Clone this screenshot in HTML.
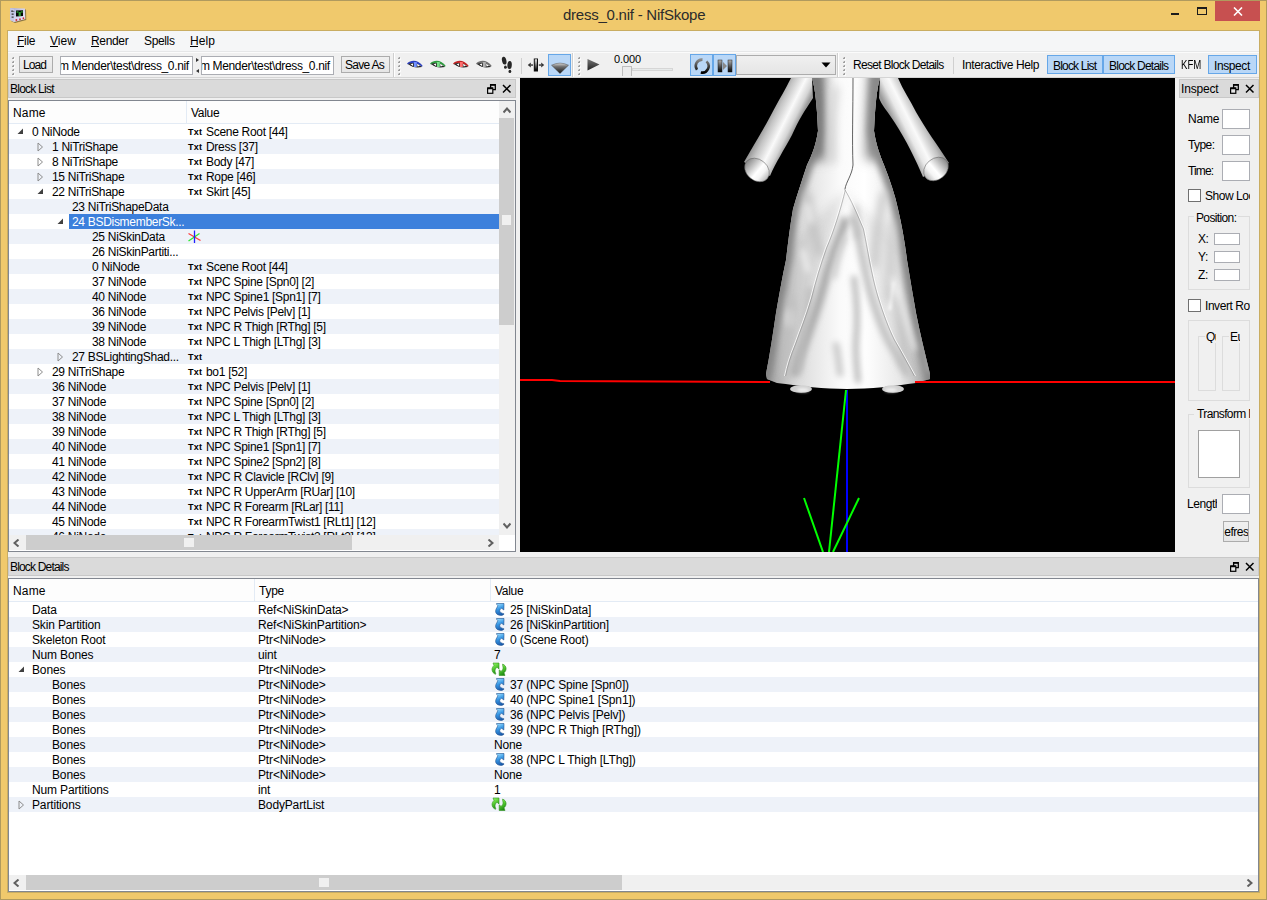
<!DOCTYPE html><html><head><meta charset="utf-8"><title>NifSkope</title><style>
*{box-sizing:border-box;margin:0;padding:0}
html,body{width:1267px;height:900px;overflow:hidden}
body{position:relative;background:#f0c96c;font-family:"Liberation Sans",sans-serif;font-size:12px;color:#000}
.a{position:absolute}
.t{position:absolute;white-space:pre}
.row{position:absolute;height:15px}
.st{background:#eef2f9}
</style></head><body>
<div class="a" style="left:0;top:0;width:1267px;height:900px;border:1px solid #b09a5e"></div>
<div class="a" style="left:7px;top:30px;width:1253px;height:863px;background:#c9ad62"></div>
<div class="a" style="left:8px;top:31px;width:1251px;height:861px;background:#f0f0f0"></div>
<svg class="a" style="left:9px;top:6px" width="18" height="18" viewBox="0 0 18 18">
<defs><linearGradient id="ig" x1="0" y1="0" x2="1" y2="1"><stop offset="0" stop-color="#a6aad6"/><stop offset="0.5" stop-color="#d2d2ec"/><stop offset="1" stop-color="#ececf8"/></linearGradient>
<filter id="isd" x="-30%" y="-30%" width="160%" height="160%"><feGaussianBlur stdDeviation="0.6"/></filter></defs>
<path d="M2 3 L17 3.5 L17.3 14 L6 17 L2 15 Z" fill="#3a3220" opacity="0.55" filter="url(#isd)"/>
<path d="M1.2 2 L16 2.6 L16.3 13 L5 16 L1.2 14 Z" fill="url(#ig)"/>
<path d="M1.2 2 L5 3 L5 16 L1.2 14 Z" fill="#c6c8e4"/>
<rect x="2.2" y="4.5" width="2" height="1.3" fill="#333"/><rect x="2.6" y="7.5" width="2" height="1.3" fill="#333"/><rect x="2.6" y="10.5" width="2" height="1.3" fill="#444"/>
<circle cx="4.8" cy="5.5" r="0.6" fill="#555"/>
<path d="M7 4.6 L14 4.2 L14 10 L7 10.6 Z" fill="#060806"/>
<rect x="9.6" y="6" width="2.2" height="4" fill="#2f9f35"/><rect x="7.5" y="5" width="2" height="2" fill="#1f6f25"/><rect x="11.8" y="4.8" width="2" height="2" fill="#1f6f25"/>
<circle cx="7.4" cy="14" r="1" fill="#d42a3a"/><circle cx="11" cy="13.2" r="1" fill="#c43a5a"/><circle cx="14.4" cy="12.2" r="0.9" fill="#d42a3a"/>
</svg>
<div class="t" style="left:563px;top:6px;font-size:15px;line-height:18px;letter-spacing:-0.24px;color:#2b2b2b">dress_0.nif - NifSkope</div>
<div class="a" style="left:1171px;top:13px;width:8px;height:2px;background:#1c1c1c"></div>
<div class="a" style="left:1197px;top:7px;width:10px;height:8px;border:1px solid #1c1c1c;border-top-width:2px"></div>
<div class="a" style="left:1215px;top:1px;width:45px;height:20px;background:#c75050"></div>
<svg class="a" style="left:1233px;top:7px" width="10" height="9" viewBox="0 0 10 9"><path d="M1 0.5 L9 8.5 M9 0.5 L1 8.5" stroke="#fff" stroke-width="1.6"/></svg>
<div class="a" style="left:8px;top:31px;width:1251px;height:20px;background:#f5f6f7"></div>
<div class="a" style="left:8px;top:51px;width:1251px;height:1px;background:#e6e7e8"></div>
<div class="t" style="left:17px;top:34px;font-size:12px;line-height:15px;letter-spacing:-0.31px">File</div>
<div class="a" style="left:17px;top:46px;width:7px;height:1px;background:#000"></div>
<div class="t" style="left:50px;top:34px;font-size:12px;line-height:15px;letter-spacing:0.03px">View</div>
<div class="a" style="left:50px;top:46px;width:8px;height:1px;background:#000"></div>
<div class="t" style="left:91px;top:34px;font-size:12px;line-height:15px;letter-spacing:-0.33px">Render</div>
<div class="a" style="left:91px;top:46px;width:8px;height:1px;background:#000"></div>
<div class="t" style="left:144px;top:34px;font-size:12px;line-height:15px;letter-spacing:-0.36px">Spells</div>
<div class="t" style="left:190px;top:34px;font-size:12px;line-height:15px;letter-spacing:0.07px">Help</div>
<div class="a" style="left:190px;top:46px;width:8px;height:1px;background:#000"></div>
<div class="a" style="left:8px;top:52px;width:1251px;height:25px;background:#f0f0f0;border-top:1px solid #fbfbfb"></div>
<div class="a" style="left:8px;top:77px;width:1251px;height:1px;background:#d5d5d5"></div>
<div class="a" style="left:12px;top:57px;width:2px;height:2px;background:linear-gradient(135deg,#d8d8d8 0 40%,#a0a0a0 40%);box-shadow:1px 1px 0 #fcfcfc"></div>
<div class="a" style="left:12px;top:61px;width:2px;height:2px;background:linear-gradient(135deg,#d8d8d8 0 40%,#a0a0a0 40%);box-shadow:1px 1px 0 #fcfcfc"></div>
<div class="a" style="left:12px;top:65px;width:2px;height:2px;background:linear-gradient(135deg,#d8d8d8 0 40%,#a0a0a0 40%);box-shadow:1px 1px 0 #fcfcfc"></div>
<div class="a" style="left:12px;top:69px;width:2px;height:2px;background:linear-gradient(135deg,#d8d8d8 0 40%,#a0a0a0 40%);box-shadow:1px 1px 0 #fcfcfc"></div>
<div class="a" style="left:12px;top:73px;width:2px;height:2px;background:linear-gradient(135deg,#d8d8d8 0 40%,#a0a0a0 40%);box-shadow:1px 1px 0 #fcfcfc"></div>
<div class="a" style="left:19px;top:56px;width:34px;height:17px;border:1px solid #acacac;background:linear-gradient(#f0f0f0,#e5e5e5)"></div>
<div class="t" style="left:23px;top:58px;font-size:12px;line-height:15px;letter-spacing:-0.90px">Load</div>
<div class="a" style="left:60px;top:56px;width:133px;height:19px;border:1px solid #abadb3;background:#fff;overflow:hidden"></div>
<div class="a" style="left:61px;top:57px;width:131px;height:17px;overflow:hidden">
<div class="t" style="left:-2px;top:2px;font-size:12px;line-height:15px;letter-spacing:-0.36px">m Mender\test\dress_0.nif</div>
</div>
<div class="a" style="left:201px;top:56px;width:133px;height:19px;border:1px solid #abadb3;background:#fff;overflow:hidden"></div>
<div class="a" style="left:202px;top:57px;width:131px;height:17px;overflow:hidden">
<div class="t" style="left:-2px;top:2px;font-size:12px;line-height:15px;letter-spacing:-0.36px">m Mender\test\dress_0.nif</div>
</div>
<svg class="a" style="left:195px;top:57px" width="5" height="17" viewBox="0 0 5 17"><path d="M1 1 L4 3 L1 5 Z" fill="#333"/><path d="M4 12 L1 14 L4 16 Z" fill="#333"/></svg>
<div class="a" style="left:341px;top:56px;width:49px;height:17px;border:1px solid #acacac;background:linear-gradient(#f0f0f0,#e5e5e5)"></div>
<div class="t" style="left:345px;top:58px;font-size:12px;line-height:15px;letter-spacing:-0.71px">Save As</div>
<div class="a" style="left:393px;top:53px;width:1px;height:24px;background:#cfcfcf"></div>
<div class="a" style="left:394px;top:53px;width:1px;height:24px;background:#fff"></div>
<div class="a" style="left:398px;top:57px;width:2px;height:2px;background:linear-gradient(135deg,#d8d8d8 0 40%,#a0a0a0 40%);box-shadow:1px 1px 0 #fcfcfc"></div>
<div class="a" style="left:398px;top:61px;width:2px;height:2px;background:linear-gradient(135deg,#d8d8d8 0 40%,#a0a0a0 40%);box-shadow:1px 1px 0 #fcfcfc"></div>
<div class="a" style="left:398px;top:65px;width:2px;height:2px;background:linear-gradient(135deg,#d8d8d8 0 40%,#a0a0a0 40%);box-shadow:1px 1px 0 #fcfcfc"></div>
<div class="a" style="left:398px;top:69px;width:2px;height:2px;background:linear-gradient(135deg,#d8d8d8 0 40%,#a0a0a0 40%);box-shadow:1px 1px 0 #fcfcfc"></div>
<div class="a" style="left:398px;top:73px;width:2px;height:2px;background:linear-gradient(135deg,#d8d8d8 0 40%,#a0a0a0 40%);box-shadow:1px 1px 0 #fcfcfc"></div>
<svg class="a" style="left:406px;top:59px" width="18" height="11" viewBox="0 0 18 11">
<path d="M1 4.5 C5 0.5 12 0.5 16.5 6.5 L16 8 C12 4 6 3.5 2 5.5 Z" fill="#2b3fbf"/>
<path d="M2 5 C6 3 11 3.5 16 8 C11 9 6 8.5 2 5 Z" fill="#222"/>
<path d="M4.5 5.2 L7 4.5 L7 7 Z" fill="#fff"/><path d="M11 4.8 L14 6.8 L11.5 7.6 Z" fill="#fff"/>
<rect x="7.8" y="3" width="3" height="5" fill="#7090ff"/>
</svg>
<svg class="a" style="left:429px;top:59px" width="18" height="11" viewBox="0 0 18 11">
<path d="M1 4.5 C5 0.5 12 0.5 16.5 6.5 L16 8 C12 4 6 3.5 2 5.5 Z" fill="#2f9a3f"/>
<path d="M2 5 C6 3 11 3.5 16 8 C11 9 6 8.5 2 5 Z" fill="#222"/>
<path d="M4.5 5.2 L7 4.5 L7 7 Z" fill="#fff"/><path d="M11 4.8 L14 6.8 L11.5 7.6 Z" fill="#fff"/>
<rect x="7.8" y="3" width="3" height="5" fill="#78e088"/>
</svg>
<svg class="a" style="left:452px;top:59px" width="18" height="11" viewBox="0 0 18 11">
<path d="M1 4.5 C5 0.5 12 0.5 16.5 6.5 L16 8 C12 4 6 3.5 2 5.5 Z" fill="#c02525"/>
<path d="M2 5 C6 3 11 3.5 16 8 C11 9 6 8.5 2 5 Z" fill="#222"/>
<path d="M4.5 5.2 L7 4.5 L7 7 Z" fill="#fff"/><path d="M11 4.8 L14 6.8 L11.5 7.6 Z" fill="#fff"/>
<rect x="7.8" y="3" width="3" height="5" fill="#ff7070"/>
</svg>
<svg class="a" style="left:475px;top:59px" width="18" height="11" viewBox="0 0 18 11">
<path d="M1 4.5 C5 0.5 12 0.5 16.5 6.5 L16 8 C12 4 6 3.5 2 5.5 Z" fill="#707070"/>
<path d="M2 5 C6 3 11 3.5 16 8 C11 9 6 8.5 2 5 Z" fill="#222"/>
<path d="M4.5 5.2 L7 4.5 L7 7 Z" fill="#fff"/><path d="M11 4.8 L14 6.8 L11.5 7.6 Z" fill="#fff"/>
<rect x="7.8" y="3" width="3" height="5" fill="#b0b0b0"/>
</svg>
<svg class="a" style="left:500px;top:56px" width="14" height="18" viewBox="0 0 14 18">
<ellipse cx="4.2" cy="4.6" rx="2.2" ry="4" fill="#262626" transform="rotate(-12 4.2 4.6)"/><ellipse cx="5.4" cy="11.2" rx="1.4" ry="1.6" fill="#262626"/>
<ellipse cx="9.6" cy="9" rx="2.2" ry="4" fill="#262626" transform="rotate(4 9.6 9)"/><ellipse cx="9.9" cy="15.4" rx="1.4" ry="1.6" fill="#262626"/>
</svg>
<div class="a" style="left:521px;top:58px;width:1px;height:16px;background:#cfcfcf"></div>
<svg class="a" style="left:527px;top:57px" width="18" height="16" viewBox="0 0 18 16">
<defs><linearGradient id="bar" x1="0" y1="0" x2="0" y2="1"><stop offset="0" stop-color="#e8e8e8"/><stop offset="1" stop-color="#000"/></linearGradient></defs>
<rect x="6.8" y="1.5" width="4.2" height="13" fill="#111"/><rect x="7.8" y="2.3" width="2.2" height="11" fill="url(#bar)"/>
<path d="M0.8 8 L3.8 5.5 L3.8 10.5 Z M17.2 8 L14.2 5.5 L14.2 10.5 Z" fill="#333"/><rect x="3.5" y="7.3" width="2.5" height="1.5" fill="#444"/><rect x="11.8" y="7.3" width="2.5" height="1.5" fill="#444"/>
</svg>
<div class="a" style="left:548px;top:54px;width:23px;height:22px;background:#b9d7f7;border:1px solid #66a7e8"></div>
<svg class="a" style="left:551px;top:62px" width="18" height="12" viewBox="0 0 18 12">
<defs><linearGradient id="cone" x1="0" y1="0" x2="0" y2="1"><stop offset="0" stop-color="#d8d8d8"/><stop offset="0.35" stop-color="#707070"/><stop offset="1" stop-color="#111"/></linearGradient></defs>
<path d="M0.5 3.2 Q9 -1 17.5 3.2 L9 11.5 Z" fill="url(#cone)" stroke="#333" stroke-width="0.4"/></svg>
<div class="a" style="left:572px;top:53px;width:1px;height:24px;background:#cfcfcf"></div>
<div class="a" style="left:573px;top:53px;width:1px;height:24px;background:#fff"></div>
<div class="a" style="left:578px;top:57px;width:2px;height:2px;background:linear-gradient(135deg,#d8d8d8 0 40%,#a0a0a0 40%);box-shadow:1px 1px 0 #fcfcfc"></div>
<div class="a" style="left:578px;top:61px;width:2px;height:2px;background:linear-gradient(135deg,#d8d8d8 0 40%,#a0a0a0 40%);box-shadow:1px 1px 0 #fcfcfc"></div>
<div class="a" style="left:578px;top:65px;width:2px;height:2px;background:linear-gradient(135deg,#d8d8d8 0 40%,#a0a0a0 40%);box-shadow:1px 1px 0 #fcfcfc"></div>
<div class="a" style="left:578px;top:69px;width:2px;height:2px;background:linear-gradient(135deg,#d8d8d8 0 40%,#a0a0a0 40%);box-shadow:1px 1px 0 #fcfcfc"></div>
<div class="a" style="left:578px;top:73px;width:2px;height:2px;background:linear-gradient(135deg,#d8d8d8 0 40%,#a0a0a0 40%);box-shadow:1px 1px 0 #fcfcfc"></div>
<svg class="a" style="left:586px;top:58px" width="15" height="14" viewBox="0 0 15 14"><defs><linearGradient id="pl" x1="0" y1="0" x2="0" y2="1"><stop offset="0" stop-color="#777"/><stop offset="1" stop-color="#222"/></linearGradient></defs><path d="M1.5 1 L13.5 6.5 L1.5 12.5 Z" fill="url(#pl)"/></svg>
<div class="t" style="left:614px;top:53px;font-size:11px;line-height:12px;letter-spacing:-0.13px">0.000</div>
<div class="a" style="left:632px;top:68px;width:41px;height:3px;background:#e7eaea;border:1px solid #d6d6d6"></div>
<div class="a" style="left:622px;top:66px;width:10px;height:10px;background:#ececec;border:1px solid #bdbdbd;border-bottom:none"></div>
<div class="a" style="left:690px;top:54px;width:24px;height:22px;background:#b9d7f7;border:1px solid #66a7e8"></div>
<div class="a" style="left:712px;top:54px;width:24px;height:22px;background:#b9d7f7;border:1px solid #66a7e8"></div>
<div class="a" style="left:712px;top:54px;width:2px;height:22px;background:#66a7e8"></div>
<svg class="a" style="left:693px;top:57px" width="18" height="18" viewBox="0 0 18 18"><defs><linearGradient id="lp1" x1="0" y1="0" x2="0" y2="1"><stop offset="0" stop-color="#888"/><stop offset="1" stop-color="#222"/></linearGradient><linearGradient id="lp2" x1="0" y1="0" x2="0" y2="1"><stop offset="0" stop-color="#777"/><stop offset="1" stop-color="#000"/></linearGradient></defs><path d="M9.5 2.6 A6.4 6.4 0 0 0 4 12.8" stroke="url(#lp1)" stroke-width="2.6" fill="none"/><path d="M7.8 15.4 A6.4 6.4 0 0 0 13.5 4.4" stroke="url(#lp2)" stroke-width="2.6" fill="none"/></svg>
<svg class="a" style="left:716px;top:59px" width="18" height="15" viewBox="0 0 18 15"><defs><linearGradient id="sq" x1="0" y1="0" x2="0" y2="1"><stop offset="0" stop-color="#b0b0b0"/><stop offset="1" stop-color="#000"/></linearGradient></defs><rect x="2" y="1" width="4" height="12" fill="url(#sq)" stroke="#222" stroke-width="0.5"/><path d="M7 3 L11 7 L7 11 Z" fill="#8a8a8a"/><rect x="12" y="1" width="4" height="12" fill="url(#sq)" stroke="#222" stroke-width="0.5"/></svg>
<div class="a" style="left:736px;top:55px;width:100px;height:20px;border:1px solid #acacac;background:linear-gradient(#f0f0f0,#e5e5e5)"></div>
<svg class="a" style="left:821px;top:62px" width="10" height="6" viewBox="0 0 10 6"><path d="M0.5 0.5 L9.5 0.5 L5 5.5 Z" fill="#000"/></svg>
<div class="a" style="left:837px;top:53px;width:1px;height:24px;background:#cfcfcf"></div>
<div class="a" style="left:838px;top:53px;width:1px;height:24px;background:#fff"></div>
<div class="a" style="left:843px;top:57px;width:2px;height:2px;background:linear-gradient(135deg,#d8d8d8 0 40%,#a0a0a0 40%);box-shadow:1px 1px 0 #fcfcfc"></div>
<div class="a" style="left:843px;top:61px;width:2px;height:2px;background:linear-gradient(135deg,#d8d8d8 0 40%,#a0a0a0 40%);box-shadow:1px 1px 0 #fcfcfc"></div>
<div class="a" style="left:843px;top:65px;width:2px;height:2px;background:linear-gradient(135deg,#d8d8d8 0 40%,#a0a0a0 40%);box-shadow:1px 1px 0 #fcfcfc"></div>
<div class="a" style="left:843px;top:69px;width:2px;height:2px;background:linear-gradient(135deg,#d8d8d8 0 40%,#a0a0a0 40%);box-shadow:1px 1px 0 #fcfcfc"></div>
<div class="a" style="left:843px;top:73px;width:2px;height:2px;background:linear-gradient(135deg,#d8d8d8 0 40%,#a0a0a0 40%);box-shadow:1px 1px 0 #fcfcfc"></div>
<div class="t" style="left:853px;top:58px;font-size:12px;line-height:15px;letter-spacing:-0.71px">Reset Block Details</div>
<div class="a" style="left:953px;top:57px;width:1px;height:17px;background:#d0d0d0"></div>
<div class="t" style="left:962px;top:58px;font-size:12px;line-height:15px;letter-spacing:-0.40px">Interactive Help</div>
<div class="a" style="left:1047px;top:55px;width:56px;height:19px;background:#b9d7f7;border:1px solid #66a7e8"></div>
<div class="a" style="left:1103px;top:55px;width:72px;height:19px;background:#b9d7f7;border:1px solid #66a7e8"></div>
<div class="t" style="left:1053px;top:59px;font-size:12px;line-height:15px;letter-spacing:-0.81px">Block List</div>
<div class="t" style="left:1109px;top:59px;font-size:12px;line-height:15px;letter-spacing:-0.77px">Block Details</div>
<div class="t" style="left:1181px;top:58px;font-size:12px;line-height:15px;transform:scaleX(0.8);transform-origin:0 0">KFM</div>
<div class="a" style="left:1208px;top:55px;width:49px;height:19px;background:#b9d7f7;border:1px solid #66a7e8"></div>
<div class="t" style="left:1214px;top:59px;font-size:12px;line-height:15px;letter-spacing:-0.40px">Inspect</div>
<div class="a" style="left:8px;top:79px;width:508px;height:19px;background:#dadada;border:1px solid #c8c8c8"></div>
<div class="t" style="left:10px;top:82px;font-size:12px;line-height:15px;letter-spacing:-0.76px">Block List</div>
<svg class="a" style="left:487px;top:84px" width="25" height="10" viewBox="0 0 25 10">
<path d="M3.6 4 V0.7 H8.3 V5.6 H6" stroke="#000" stroke-width="1.3" fill="none"/>
<rect x="0.6" y="4" width="5.2" height="5.3" fill="#e6e6e6" stroke="#000" stroke-width="1.2"/>
<path d="M0.6 4.4 H5.8 M3.6 0.9 H8.3" stroke="#000" stroke-width="1.8"/>
<path d="M16 1 L23.5 8.5 M23.5 1 L16 8.5" stroke="#000" stroke-width="1.5"/></svg>
<div class="a" style="left:1179px;top:79px;width:80px;height:19px;background:#dadada;border:1px solid #c8c8c8"></div>
<div class="t" style="left:1181px;top:82px;font-size:12px;line-height:15px;letter-spacing:-0.17px">Inspect</div>
<svg class="a" style="left:1230px;top:84px" width="25" height="10" viewBox="0 0 25 10">
<path d="M3.6 4 V0.7 H8.3 V5.6 H6" stroke="#000" stroke-width="1.3" fill="none"/>
<rect x="0.6" y="4" width="5.2" height="5.3" fill="#e6e6e6" stroke="#000" stroke-width="1.2"/>
<path d="M0.6 4.4 H5.8 M3.6 0.9 H8.3" stroke="#000" stroke-width="1.8"/>
<path d="M16 1 L23.5 8.5 M23.5 1 L16 8.5" stroke="#000" stroke-width="1.5"/></svg>
<div class="a" style="left:8px;top:557px;width:1251px;height:19px;background:#dadada;border:1px solid #c8c8c8"></div>
<div class="t" style="left:10px;top:560px;font-size:12px;line-height:15px;letter-spacing:-0.83px">Block Details</div>
<svg class="a" style="left:1230px;top:562px" width="25" height="10" viewBox="0 0 25 10">
<path d="M3.6 4 V0.7 H8.3 V5.6 H6" stroke="#000" stroke-width="1.3" fill="none"/>
<rect x="0.6" y="4" width="5.2" height="5.3" fill="#e6e6e6" stroke="#000" stroke-width="1.2"/>
<path d="M0.6 4.4 H5.8 M3.6 0.9 H8.3" stroke="#000" stroke-width="1.8"/>
<path d="M16 1 L23.5 8.5 M23.5 1 L16 8.5" stroke="#000" stroke-width="1.5"/></svg>
<div class="a" style="left:8px;top:100px;width:508px;height:452px;border:1px solid #828790;background:#fff;overflow:hidden">
<div class="a" style="left:0;top:0;width:490px;height:23px;background:#fdfdfd;border-bottom:1px solid #e3ebf5"></div>
<div class="a" style="left:177px;top:0;width:1px;height:22px;background:#e3ebf5"></div>
<div class="t" style="left:4px;top:5px;font-size:12px;line-height:15px;letter-spacing:0.16px">Name</div>
<div class="t" style="left:182px;top:5px;font-size:12px;line-height:15px;letter-spacing:-0.30px">Value</div>
<div class="row" style="left:0;top:23px;width:490px"></div>
<svg class="a" style="left:8px;top:27px" width="7" height="7" viewBox="0 0 7 7"><path d="M6 0.5 L6 6 L0.5 6 Z" fill="#404040"/></svg>
<div class="t" style="left:23px;top:24px;font-size:12px;line-height:15px;letter-spacing:-0.30px">0 NiNode</div>
<div class="t" style="left:179px;top:24px;font-size:9px;line-height:14px;letter-spacing:0.20px;font-weight:bold">Txt</div>
<div class="t" style="left:197px;top:24px;font-size:12px;line-height:15px;letter-spacing:-0.30px">Scene Root [44]</div>
<div class="row st" style="left:0;top:38px;width:490px"></div>
<svg class="a" style="left:28px;top:41px" width="7" height="10" viewBox="0 0 7 10"><path d="M1 1 L5.5 5 L1 9 Z" fill="none" stroke="#8c8c8c" stroke-width="1"/></svg>
<div class="t" style="left:43px;top:39px;font-size:12px;line-height:15px;letter-spacing:-0.30px">1 NiTriShape</div>
<div class="t" style="left:179px;top:39px;font-size:9px;line-height:14px;letter-spacing:0.20px;font-weight:bold">Txt</div>
<div class="t" style="left:197px;top:39px;font-size:12px;line-height:15px;letter-spacing:-0.30px">Dress [37]</div>
<div class="row" style="left:0;top:53px;width:490px"></div>
<svg class="a" style="left:28px;top:56px" width="7" height="10" viewBox="0 0 7 10"><path d="M1 1 L5.5 5 L1 9 Z" fill="none" stroke="#8c8c8c" stroke-width="1"/></svg>
<div class="t" style="left:43px;top:54px;font-size:12px;line-height:15px;letter-spacing:-0.30px">8 NiTriShape</div>
<div class="t" style="left:179px;top:54px;font-size:9px;line-height:14px;letter-spacing:0.20px;font-weight:bold">Txt</div>
<div class="t" style="left:197px;top:54px;font-size:12px;line-height:15px;letter-spacing:-0.30px">Body [47]</div>
<div class="row st" style="left:0;top:68px;width:490px"></div>
<svg class="a" style="left:28px;top:71px" width="7" height="10" viewBox="0 0 7 10"><path d="M1 1 L5.5 5 L1 9 Z" fill="none" stroke="#8c8c8c" stroke-width="1"/></svg>
<div class="t" style="left:43px;top:69px;font-size:12px;line-height:15px;letter-spacing:-0.30px">15 NiTriShape</div>
<div class="t" style="left:179px;top:69px;font-size:9px;line-height:14px;letter-spacing:0.20px;font-weight:bold">Txt</div>
<div class="t" style="left:197px;top:69px;font-size:12px;line-height:15px;letter-spacing:-0.30px">Rope [46]</div>
<div class="row" style="left:0;top:83px;width:490px"></div>
<svg class="a" style="left:28px;top:87px" width="7" height="7" viewBox="0 0 7 7"><path d="M6 0.5 L6 6 L0.5 6 Z" fill="#404040"/></svg>
<div class="t" style="left:43px;top:84px;font-size:12px;line-height:15px;letter-spacing:-0.30px">22 NiTriShape</div>
<div class="t" style="left:179px;top:84px;font-size:9px;line-height:14px;letter-spacing:0.20px;font-weight:bold">Txt</div>
<div class="t" style="left:197px;top:84px;font-size:12px;line-height:15px;letter-spacing:-0.30px">Skirt [45]</div>
<div class="row st" style="left:0;top:98px;width:490px"></div>
<div class="t" style="left:63px;top:99px;font-size:12px;line-height:15px;letter-spacing:-0.30px">23 NiTriShapeData</div>
<div class="row" style="left:0;top:113px;width:490px"></div>
<div class="a" style="left:60px;top:113px;width:430px;height:15px;background:#3c80dc"></div>
<svg class="a" style="left:48px;top:117px" width="7" height="7" viewBox="0 0 7 7"><path d="M6 0.5 L6 6 L0.5 6 Z" fill="#404040"/></svg>
<div class="t" style="left:63px;top:114px;font-size:12px;line-height:15px;letter-spacing:-0.30px;color:#fff">24 BSDismemberSk...</div>
<div class="row st" style="left:0;top:128px;width:490px"></div>
<div class="t" style="left:83px;top:129px;font-size:12px;line-height:15px;letter-spacing:-0.30px">25 NiSkinData</div>
<svg class="a" style="left:178px;top:128px" width="15" height="15" viewBox="0 0 15 15"><path d="M1.5 4.5 L13.5 11.5" stroke="#ff3b3b" stroke-width="1.3"/><path d="M1.5 12 L12.5 4.5" stroke="#2ee82e" stroke-width="1.3"/><path d="M7.5 1.5 V14" stroke="#2020ff" stroke-width="1.3"/></svg>
<div class="row" style="left:0;top:143px;width:490px"></div>
<div class="t" style="left:83px;top:144px;font-size:12px;line-height:15px;letter-spacing:-0.30px">26 NiSkinPartiti...</div>
<div class="row st" style="left:0;top:158px;width:490px"></div>
<div class="t" style="left:83px;top:159px;font-size:12px;line-height:15px;letter-spacing:-0.30px">0 NiNode</div>
<div class="t" style="left:179px;top:159px;font-size:9px;line-height:14px;letter-spacing:0.20px;font-weight:bold">Txt</div>
<div class="t" style="left:197px;top:159px;font-size:12px;line-height:15px;letter-spacing:-0.30px">Scene Root [44]</div>
<div class="row" style="left:0;top:173px;width:490px"></div>
<div class="t" style="left:83px;top:174px;font-size:12px;line-height:15px;letter-spacing:-0.30px">37 NiNode</div>
<div class="t" style="left:179px;top:174px;font-size:9px;line-height:14px;letter-spacing:0.20px;font-weight:bold">Txt</div>
<div class="t" style="left:197px;top:174px;font-size:12px;line-height:15px;letter-spacing:-0.30px">NPC Spine [Spn0] [2]</div>
<div class="row st" style="left:0;top:188px;width:490px"></div>
<div class="t" style="left:83px;top:189px;font-size:12px;line-height:15px;letter-spacing:-0.30px">40 NiNode</div>
<div class="t" style="left:179px;top:189px;font-size:9px;line-height:14px;letter-spacing:0.20px;font-weight:bold">Txt</div>
<div class="t" style="left:197px;top:189px;font-size:12px;line-height:15px;letter-spacing:-0.30px">NPC Spine1 [Spn1] [7]</div>
<div class="row" style="left:0;top:203px;width:490px"></div>
<div class="t" style="left:83px;top:204px;font-size:12px;line-height:15px;letter-spacing:-0.30px">36 NiNode</div>
<div class="t" style="left:179px;top:204px;font-size:9px;line-height:14px;letter-spacing:0.20px;font-weight:bold">Txt</div>
<div class="t" style="left:197px;top:204px;font-size:12px;line-height:15px;letter-spacing:-0.30px">NPC Pelvis [Pelv] [1]</div>
<div class="row st" style="left:0;top:218px;width:490px"></div>
<div class="t" style="left:83px;top:219px;font-size:12px;line-height:15px;letter-spacing:-0.30px">39 NiNode</div>
<div class="t" style="left:179px;top:219px;font-size:9px;line-height:14px;letter-spacing:0.20px;font-weight:bold">Txt</div>
<div class="t" style="left:197px;top:219px;font-size:12px;line-height:15px;letter-spacing:-0.30px">NPC R Thigh [RThg] [5]</div>
<div class="row" style="left:0;top:233px;width:490px"></div>
<div class="t" style="left:83px;top:234px;font-size:12px;line-height:15px;letter-spacing:-0.30px">38 NiNode</div>
<div class="t" style="left:179px;top:234px;font-size:9px;line-height:14px;letter-spacing:0.20px;font-weight:bold">Txt</div>
<div class="t" style="left:197px;top:234px;font-size:12px;line-height:15px;letter-spacing:-0.30px">NPC L Thigh [LThg] [3]</div>
<div class="row st" style="left:0;top:248px;width:490px"></div>
<svg class="a" style="left:48px;top:251px" width="7" height="10" viewBox="0 0 7 10"><path d="M1 1 L5.5 5 L1 9 Z" fill="none" stroke="#8c8c8c" stroke-width="1"/></svg>
<div class="t" style="left:63px;top:249px;font-size:12px;line-height:15px;letter-spacing:-0.30px">27 BSLightingShad...</div>
<div class="t" style="left:179px;top:249px;font-size:9px;line-height:14px;letter-spacing:0.20px;font-weight:bold">Txt</div>
<div class="row" style="left:0;top:263px;width:490px"></div>
<svg class="a" style="left:28px;top:266px" width="7" height="10" viewBox="0 0 7 10"><path d="M1 1 L5.5 5 L1 9 Z" fill="none" stroke="#8c8c8c" stroke-width="1"/></svg>
<div class="t" style="left:43px;top:264px;font-size:12px;line-height:15px;letter-spacing:-0.30px">29 NiTriShape</div>
<div class="t" style="left:179px;top:264px;font-size:9px;line-height:14px;letter-spacing:0.20px;font-weight:bold">Txt</div>
<div class="t" style="left:197px;top:264px;font-size:12px;line-height:15px;letter-spacing:-0.30px">bo1 [52]</div>
<div class="row st" style="left:0;top:278px;width:490px"></div>
<div class="t" style="left:43px;top:279px;font-size:12px;line-height:15px;letter-spacing:-0.30px">36 NiNode</div>
<div class="t" style="left:179px;top:279px;font-size:9px;line-height:14px;letter-spacing:0.20px;font-weight:bold">Txt</div>
<div class="t" style="left:197px;top:279px;font-size:12px;line-height:15px;letter-spacing:-0.30px">NPC Pelvis [Pelv] [1]</div>
<div class="row" style="left:0;top:293px;width:490px"></div>
<div class="t" style="left:43px;top:294px;font-size:12px;line-height:15px;letter-spacing:-0.30px">37 NiNode</div>
<div class="t" style="left:179px;top:294px;font-size:9px;line-height:14px;letter-spacing:0.20px;font-weight:bold">Txt</div>
<div class="t" style="left:197px;top:294px;font-size:12px;line-height:15px;letter-spacing:-0.30px">NPC Spine [Spn0] [2]</div>
<div class="row st" style="left:0;top:308px;width:490px"></div>
<div class="t" style="left:43px;top:309px;font-size:12px;line-height:15px;letter-spacing:-0.30px">38 NiNode</div>
<div class="t" style="left:179px;top:309px;font-size:9px;line-height:14px;letter-spacing:0.20px;font-weight:bold">Txt</div>
<div class="t" style="left:197px;top:309px;font-size:12px;line-height:15px;letter-spacing:-0.30px">NPC L Thigh [LThg] [3]</div>
<div class="row" style="left:0;top:323px;width:490px"></div>
<div class="t" style="left:43px;top:324px;font-size:12px;line-height:15px;letter-spacing:-0.30px">39 NiNode</div>
<div class="t" style="left:179px;top:324px;font-size:9px;line-height:14px;letter-spacing:0.20px;font-weight:bold">Txt</div>
<div class="t" style="left:197px;top:324px;font-size:12px;line-height:15px;letter-spacing:-0.30px">NPC R Thigh [RThg] [5]</div>
<div class="row st" style="left:0;top:338px;width:490px"></div>
<div class="t" style="left:43px;top:339px;font-size:12px;line-height:15px;letter-spacing:-0.30px">40 NiNode</div>
<div class="t" style="left:179px;top:339px;font-size:9px;line-height:14px;letter-spacing:0.20px;font-weight:bold">Txt</div>
<div class="t" style="left:197px;top:339px;font-size:12px;line-height:15px;letter-spacing:-0.30px">NPC Spine1 [Spn1] [7]</div>
<div class="row" style="left:0;top:353px;width:490px"></div>
<div class="t" style="left:43px;top:354px;font-size:12px;line-height:15px;letter-spacing:-0.30px">41 NiNode</div>
<div class="t" style="left:179px;top:354px;font-size:9px;line-height:14px;letter-spacing:0.20px;font-weight:bold">Txt</div>
<div class="t" style="left:197px;top:354px;font-size:12px;line-height:15px;letter-spacing:-0.30px">NPC Spine2 [Spn2] [8]</div>
<div class="row st" style="left:0;top:368px;width:490px"></div>
<div class="t" style="left:43px;top:369px;font-size:12px;line-height:15px;letter-spacing:-0.30px">42 NiNode</div>
<div class="t" style="left:179px;top:369px;font-size:9px;line-height:14px;letter-spacing:0.20px;font-weight:bold">Txt</div>
<div class="t" style="left:197px;top:369px;font-size:12px;line-height:15px;letter-spacing:-0.30px">NPC R Clavicle [RClv] [9]</div>
<div class="row" style="left:0;top:383px;width:490px"></div>
<div class="t" style="left:43px;top:384px;font-size:12px;line-height:15px;letter-spacing:-0.30px">43 NiNode</div>
<div class="t" style="left:179px;top:384px;font-size:9px;line-height:14px;letter-spacing:0.20px;font-weight:bold">Txt</div>
<div class="t" style="left:197px;top:384px;font-size:12px;line-height:15px;letter-spacing:-0.30px">NPC R UpperArm [RUar] [10]</div>
<div class="row st" style="left:0;top:398px;width:490px"></div>
<div class="t" style="left:43px;top:399px;font-size:12px;line-height:15px;letter-spacing:-0.30px">44 NiNode</div>
<div class="t" style="left:179px;top:399px;font-size:9px;line-height:14px;letter-spacing:0.20px;font-weight:bold">Txt</div>
<div class="t" style="left:197px;top:399px;font-size:12px;line-height:15px;letter-spacing:-0.30px">NPC R Forearm [RLar] [11]</div>
<div class="row" style="left:0;top:413px;width:490px"></div>
<div class="t" style="left:43px;top:414px;font-size:12px;line-height:15px;letter-spacing:-0.30px">45 NiNode</div>
<div class="t" style="left:179px;top:414px;font-size:9px;line-height:14px;letter-spacing:0.20px;font-weight:bold">Txt</div>
<div class="t" style="left:197px;top:414px;font-size:12px;line-height:15px;letter-spacing:-0.30px">NPC R ForearmTwist1 [RLt1] [12]</div>
<div class="row st" style="left:0;top:428px;width:490px"></div>
<div class="t" style="left:43px;top:429px;font-size:12px;line-height:15px;letter-spacing:-0.30px">46 NiNode</div>
<div class="t" style="left:179px;top:429px;font-size:9px;line-height:14px;letter-spacing:0.20px;font-weight:bold">Txt</div>
<div class="t" style="left:197px;top:429px;font-size:12px;line-height:15px;letter-spacing:-0.30px">NPC R ForearmTwist2 [RLt2] [13]</div>
<div class="a" style="left:490px;top:0;width:16px;height:434px;background:#f0f0f0"></div>
<svg class="a" style="left:494px;top:6px" width="8" height="7" viewBox="0 0 8 7"><path d="M0.5 5.5 L4 1.5 L7.5 5.5" stroke="#606060" stroke-width="2" fill="none"/></svg>
<div class="a" style="left:490px;top:17px;width:15px;height:207px;background:#cdcdcd"></div>
<div class="a" style="left:493px;top:114px;width:9px;height:10px;background:#f0f0f0"></div>
<svg class="a" style="left:494px;top:421px" width="8" height="7" viewBox="0 0 8 7"><path d="M0.5 1.5 L4 5.5 L7.5 1.5" stroke="#606060" stroke-width="2" fill="none"/></svg>
<div class="a" style="left:0;top:434px;width:490px;height:15px;background:#f0f0f0"></div>
<svg class="a" style="left:4px;top:438px" width="7" height="8" viewBox="0 0 7 8"><path d="M5.5 0.5 L1.5 4 L5.5 7.5" stroke="#606060" stroke-width="2" fill="none"/></svg>
<div class="a" style="left:17px;top:434px;width:326px;height:15px;background:#cdcdcd"></div>
<div class="a" style="left:175px;top:437px;width:10px;height:9px;background:#f0f0f0"></div>
<svg class="a" style="left:478px;top:438px" width="7" height="8" viewBox="0 0 7 8"><path d="M1.5 0.5 L5.5 4 L1.5 7.5" stroke="#606060" stroke-width="2" fill="none"/></svg>
<div class="a" style="left:490px;top:434px;width:16px;height:16px;background:#fff"></div>
</div>
<div class="a" style="left:520px;top:78px;width:655px;height:474px;background:#000;overflow:hidden">
<svg width="655" height="474" viewBox="520 78 655 474" style="position:absolute;left:0;top:0">
<defs>
<linearGradient id="body" x1="0" y1="0" x2="1" y2="0">
<stop offset="0" stop-color="#a8a8a8"/><stop offset="0.2" stop-color="#dcdcdc"/><stop offset="0.45" stop-color="#fafafa"/><stop offset="0.6" stop-color="#ffffff"/><stop offset="0.82" stop-color="#e8e8e8"/><stop offset="1" stop-color="#a0a0a0"/>
</linearGradient>
<linearGradient id="lslv" gradientUnits="userSpaceOnUse" x1="764" y1="116" x2="794" y2="131">
<stop offset="0" stop-color="#7e7e7e"/><stop offset="0.3" stop-color="#c4c4c4"/><stop offset="0.62" stop-color="#fafafa"/><stop offset="0.85" stop-color="#d4d4d4"/><stop offset="1" stop-color="#9a9a9a"/>
</linearGradient>
<linearGradient id="rslv" gradientUnits="userSpaceOnUse" x1="898" y1="131" x2="928" y2="116">
<stop offset="0" stop-color="#9a9a9a"/><stop offset="0.25" stop-color="#e8e8e8"/><stop offset="0.45" stop-color="#fafafa"/><stop offset="0.75" stop-color="#c0c0c0"/><stop offset="1" stop-color="#7a7a7a"/>
</linearGradient>
<linearGradient id="cufl" gradientUnits="userSpaceOnUse" x1="744" y1="170" x2="770" y2="170"><stop offset="0" stop-color="#8a8a8a"/><stop offset="0.55" stop-color="#ffffff"/><stop offset="0.75" stop-color="#f4f4f4"/><stop offset="1" stop-color="#bdbdbd"/></linearGradient>
<linearGradient id="cufr" gradientUnits="userSpaceOnUse" x1="949" y1="169" x2="923" y2="169"><stop offset="0" stop-color="#8a8a8a"/><stop offset="0.55" stop-color="#ffffff"/><stop offset="0.75" stop-color="#f4f4f4"/><stop offset="1" stop-color="#bdbdbd"/></linearGradient>
<clipPath id="cb"><path d="M812 78 L880 78 C877 88 875 105 874 131 C876 145 880 155 884 165 C890 180 895 195 898 209 C902 226 905 243 907 260 C910 278 913 296 916 313 C920 333 925 354 930 374 L930 379 L916 383 C895 386 870 389 847 389 C825 389 800 386 777 383 L767 379 L766 374 C770 354 773 333 776 313 C779 296 782 278 786 260 C788 243 790 226 793 209 C797 195 802 180 807 165 C812 155 816 145 818 131 C817 105 815 88 812 78 Z"/></clipPath>
<clipPath id="cls"><path d="M791 78 L812 78 L813 98 C805 110 798 121 792 135 C784 150 776 162 770 176 L744 162 C752 148 762 132 771 115 C779 100 786 88 791 78 Z"/></clipPath>
<clipPath id="crs"><path d="M880 78 L898 78 C903 90 910 100 916 112 C925 128 938 146 949 163 L923 177 C916 160 906 140 895 123 C888 112 881 104 879 98 Z"/></clipPath>
<filter id="bl" filterUnits="userSpaceOnUse" x="500" y="40" width="700" height="520"><feGaussianBlur stdDeviation="3"/></filter><filter id="bl4" filterUnits="userSpaceOnUse" x="500" y="40" width="700" height="520"><feGaussianBlur stdDeviation="6"/></filter><filter id="bl3" filterUnits="userSpaceOnUse" x="500" y="40" width="700" height="520"><feGaussianBlur stdDeviation="4.5"/></filter>
<filter id="bl2" filterUnits="userSpaceOnUse" x="500" y="40" width="700" height="520"><feGaussianBlur stdDeviation="1.5"/></filter>
</defs>
<path d="M791 78 L812 78 L813 98 C805 110 798 121 792 135 C784 150 776 162 770 176 L744 162 C752 148 762 132 771 115 C779 100 786 88 791 78 Z" fill="url(#lslv)"/>
<path d="M880 78 L898 78 C903 90 910 100 916 112 C925 128 938 146 949 163 L923 177 C916 160 906 140 895 123 C888 112 881 104 879 98 Z" fill="url(#rslv)"/>
<g transform="rotate(40 757 170)"><ellipse cx="757" cy="170" rx="13.5" ry="10.5" fill="url(#cufl)" stroke="#5a5a5a" stroke-width="0.5"/></g>
<g transform="rotate(-40 936 169)"><ellipse cx="936" cy="169" rx="13.5" ry="10.5" fill="url(#cufr)" stroke="#5a5a5a" stroke-width="0.5"/></g>
<path d="M812 78 L880 78 C877 88 875 105 874 131 C876 145 880 155 884 165 C890 180 895 195 898 209 C902 226 905 243 907 260 C910 278 913 296 916 313 C920 333 925 354 930 374 L930 379 L916 383 C895 386 870 389 847 389 C825 389 800 386 777 383 L767 379 L766 374 C770 354 773 333 776 313 C779 296 782 278 786 260 C788 243 790 226 793 209 C797 195 802 180 807 165 C812 155 816 145 818 131 C817 105 815 88 812 78 Z" fill="url(#body)"/>
<g clip-path="url(#cb)">
<path d="M845 189 C840 210 833 232 826 248 C820 265 815 282 811 298 C806 315 800 330 795 344 C790 356 787 366 785 376 L780 395 L740 395 L786 250 Z" fill="#9a9a9a" opacity="0.22" filter="url(#bl3)"/>
<path d="M845 189 C852 200 858 215 864 229 C868 248 872 275 878 295 C884 315 890 330 895 340 C902 352 909 365 915 376 L925 395 L960 395 L906 250 Z" fill="#9a9a9a" opacity="0.16" filter="url(#bl3)"/>
<path d="M845 189 C840 210 833 232 826 248 C820 265 815 282 811 298 C806 315 800 330 795 344 C790 356 787 366 785 376" transform="translate(9 0)" stroke="#aaaaaa" stroke-width="9" fill="none" stroke-dasharray="0 30 500" filter="url(#bl)"/>
<path d="M845 189 C852 200 858 215 864 229 C868 248 872 275 878 295 C884 315 890 330 895 340 C902 352 909 365 915 376" transform="translate(-7 0)" stroke="#bdbdbd" stroke-width="7" fill="none" stroke-dasharray="0 30 500" filter="url(#bl)"/>
<ellipse cx="789" cy="318" rx="4" ry="10" fill="#ffffff" opacity="0.7" filter="url(#bl)"/>
<path d="M893 282 C892 292 891 300 890 310" stroke="#ffffff" stroke-width="3" fill="none" filter="url(#bl2)"/>
<path d="M812 40 C815 88 817 105 818 131 C816 145 812 155 807 165 C802 180 797 195 793 209 C790 226 788 243 786 260 C782 278 779 296 776 313 C773 333 770 354 766 374 L760 400 M936 400 L930 374 C925 354 920 333 916 313 C913 296 910 278 907 260 C905 243 902 226 898 209 C895 195 890 180 884 165 C880 155 876 145 874 131 C875 105 877 88 880 40" fill="none" stroke="#858585" stroke-width="12" filter="url(#bl)"/>
<path d="M814 50 C817 100 819 125 818 160" fill="none" stroke="#7a7a7a" stroke-width="18" filter="url(#bl4)"/>
<path d="M878 50 C875 100 873 125 874 160" fill="none" stroke="#8a8a8a" stroke-width="16" filter="url(#bl4)"/>
<g stroke="#b4b4b4" fill="none" stroke-linecap="round" filter="url(#bl3)">
<path d="M835 90 C832 110 830 130 832 160" stroke-width="8" stroke="#d8d8d8"/>
<path d="M807 194 C810 215 814 235 820 254" stroke-width="6" stroke="#bcbcbc"/>
<path d="M884 194 C879 215 876 240 874 265" stroke-width="6" stroke="#c0c0c0"/>
<path d="M892 222 C892 250 890 275 888 300" stroke-width="5" stroke="#c4c4c4"/>
<path d="M792 300 C789 325 787 350 786 372" stroke-width="7" stroke="#c0c0c0"/>
<path d="M899 300 C901 325 903 345 904 365" stroke-width="6" stroke="#bcbcbc"/>
</g>
<g stroke="#a8a8a8" fill="none" stroke-linecap="round" filter="url(#bl)">
<path d="M855 208 C857 220 858 230 858 237" stroke-width="5" stroke="#c0c0c0"/>
<path d="M845 237 C840 250 836 265 834 277" stroke-width="5" stroke="#cccccc"/>
<path d="M854 278 C857 300 858 320 856 340 C855 355 857 370 858 381" stroke-width="5" stroke="#b0b0b0"/>
<path d="M810 290 C806 320 802 345 799 370" stroke-width="6" stroke="#bcbcbc"/>
<path d="M836 345 C838 355 839 365 840 374" stroke-width="6" stroke="#c4c4c4"/>
<path d="M920 300 C923 325 926 345 929 370" stroke-width="6" stroke="#a8a8a8"/>
</g>
<g stroke="#ffffff" fill="none" stroke-linecap="round" filter="url(#bl)">
<path d="M808 205 C809 212 810 218 811 222" stroke-width="3"/>
<path d="M803 251 C805 258 806 265 808 271" stroke-width="3"/>
<path d="M893 278 C900 300 908 325 915 349" stroke-width="3"/>
</g>
</g>
<ellipse cx="801" cy="389" rx="11" ry="3.8" fill="#d0d0d0"/><ellipse cx="803" cy="390" rx="6" ry="2" fill="#f0f0f0" filter="url(#bl2)"/>
<ellipse cx="893" cy="389" rx="11" ry="3.8" fill="#d0d0d0"/><ellipse cx="891" cy="390" rx="6" ry="2" fill="#f0f0f0" filter="url(#bl2)"/>
<path d="M853 78 C853 110 852 140 853 165 C852 175 846 182 845 189" stroke="#3a3a3a" stroke-width="0.8" fill="none"/>
<path d="M845 189 C840 210 833 232 826 248 C820 265 815 282 811 298 C806 315 800 330 795 344 C790 356 787 366 785 376" stroke="#ffffff" stroke-width="0.9" fill="none" transform="translate(-0.5 0)" opacity="0.9"/>
<path d="M845 189 C840 210 833 232 826 248 C820 265 815 282 811 298 C806 315 800 330 795 344 C790 356 787 366 785 376" stroke="#808080" stroke-width="0.5" fill="none" transform="translate(0.6 0)"/>
<path d="M845 189 C852 200 858 215 864 229 C868 248 872 275 878 295 C884 315 890 330 895 340 C902 352 909 365 915 376" stroke="#ffffff" stroke-width="0.9" fill="none" transform="translate(0.5 0)" opacity="0.9"/>
<path d="M845 189 C852 200 858 215 864 229 C868 248 872 275 878 295 C884 315 890 330 895 340 C902 352 909 365 915 376" stroke="#808080" stroke-width="0.5" fill="none" transform="translate(-0.6 0)"/>
<path d="M520 380 L552 380 L560 381 L770 382" stroke="#ff0000" stroke-width="2" fill="none"/>
<path d="M915 382 L1175 382" stroke="#ff0000" stroke-width="2" fill="none"/>
<path d="M847 390 L847 552" stroke="#0000ff" stroke-width="2"/>
<path d="M846 390 L829 552" stroke="#00ff00" stroke-width="2"/>
<path d="M804 498 L823 552" stroke="#00ff00" stroke-width="2"/>
<path d="M859 498 L833 552" stroke="#00ff00" stroke-width="2"/>
</svg>
</div>
<div class="a" style="left:1176px;top:98px;width:74px;height:458px;overflow:hidden">
<div class="a" style="left:11px;top:12px;width:33px;height:16px;overflow:hidden">
<div class="t" style="left:1px;top:2px;font-size:12px;line-height:15px;letter-spacing:-0.21px">Name:</div>
</div>
<div class="a" style="left:46px;top:11px;width:28px;height:20px;border:1px solid #abadb3;background:#fff"></div>
<div class="t" style="left:12px;top:40px;font-size:12px;line-height:15px;letter-spacing:-0.59px">Type:</div>
<div class="a" style="left:46px;top:37px;width:28px;height:20px;border:1px solid #abadb3;background:#fff"></div>
<div class="t" style="left:12px;top:66px;font-size:12px;line-height:15px;letter-spacing:-0.89px">Time:</div>
<div class="a" style="left:46px;top:63px;width:28px;height:20px;border:1px solid #abadb3;background:#fff"></div>
<div class="a" style="left:12px;top:91px;width:13px;height:13px;border:1px solid #707070;background:#fff"></div>
<div class="t" style="left:29px;top:91px;font-size:12px;line-height:15px;letter-spacing:-0.45px">Show Local</div>
<div class="a" style="left:12px;top:118px;width:62px;height:74px;border:1px solid #dcdcdc"></div>
<div class="a" style="left:18px;top:112px;width:44px;height:12px;background:#f0f0f0"></div>
<div class="t" style="left:20px;top:113px;font-size:12px;line-height:15px;letter-spacing:-0.63px">Position:</div>
<div class="t" style="left:22px;top:134px;font-size:12px;line-height:15px;letter-spacing:-0.45px">X:</div>
<div class="a" style="left:38px;top:135px;width:26px;height:12px;border:1px solid #abadb3;background:#fff"></div>
<div class="t" style="left:22px;top:152px;font-size:12px;line-height:15px;letter-spacing:-0.45px">Y:</div>
<div class="a" style="left:38px;top:153px;width:26px;height:12px;border:1px solid #abadb3;background:#fff"></div>
<div class="t" style="left:22px;top:170px;font-size:12px;line-height:15px;letter-spacing:-0.45px">Z:</div>
<div class="a" style="left:38px;top:171px;width:26px;height:12px;border:1px solid #abadb3;background:#fff"></div>
<div class="a" style="left:12px;top:201px;width:13px;height:13px;border:1px solid #707070;background:#fff"></div>
<div class="t" style="left:29px;top:201px;font-size:12px;line-height:15px;letter-spacing:-0.45px">Invert Rotation</div>
<div class="a" style="left:12px;top:222px;width:62px;height:81px;border:1px solid #dcdcdc"></div>
<div class="a" style="left:22px;top:238px;width:18px;height:55px;border:1px solid #dcdcdc"></div>
<div class="a" style="left:46px;top:238px;width:18px;height:55px;border:1px solid #dcdcdc"></div>
<div class="a" style="left:29px;top:232px;width:11px;height:13px;background:#f0f0f0;overflow:hidden">
<div class="t" style="left:1px;top:0px;font-size:12px;line-height:15px;letter-spacing:-0.60px">Quat</div>
</div>
<div class="a" style="left:53px;top:232px;width:11px;height:13px;background:#f0f0f0;overflow:hidden">
<div class="t" style="left:1px;top:0px;font-size:12px;line-height:15px;letter-spacing:-0.60px">Euler</div>
</div>
<div class="a" style="left:12px;top:316px;width:62px;height:74px;border:1px solid #dcdcdc"></div>
<div class="a" style="left:18px;top:309px;width:60px;height:12px;background:#f0f0f0"></div>
<div class="t" style="left:21px;top:309px;font-size:12px;line-height:15px;letter-spacing:-0.62px">Transform Matrix</div>
<div class="a" style="left:22px;top:332px;width:42px;height:48px;border:1px solid #a0a0a0;background:#fff"></div>
<div class="a" style="left:11px;top:399px;width:30px;height:15px;overflow:hidden">
<div class="t" style="left:0px;top:0px;font-size:12px;line-height:15px;letter-spacing:-0.45px">Length:</div>
</div>
<div class="a" style="left:46px;top:396px;width:28px;height:20px;border:1px solid #abadb3;background:#fff"></div>
<div class="a" style="left:47px;top:423px;width:26px;height:21px;border:1px solid #acacac;background:linear-gradient(#f0f0f0,#e5e5e5);overflow:hidden">
<div class="t" style="left:-8px;top:3px;font-size:12px;line-height:15px;letter-spacing:-0.45px">Refresh</div>
</div>
</div>
<div class="a" style="left:8px;top:578px;width:1251px;height:314px;border:1px solid #828790;background:#fff;overflow:hidden">
<div class="a" style="left:0;top:0;width:1249px;height:23px;background:#fdfdfd;border-bottom:1px solid #e3ebf5"></div>
<div class="a" style="left:245px;top:0;width:1px;height:22px;background:#e3ebf5"></div>
<div class="a" style="left:481px;top:0;width:1px;height:22px;background:#e3ebf5"></div>
<div class="t" style="left:4px;top:5px;font-size:12px;line-height:15px;letter-spacing:0.16px">Name</div>
<div class="t" style="left:250px;top:5px;font-size:12px;line-height:15px;letter-spacing:-0.24px">Type</div>
<div class="t" style="left:486px;top:5px;font-size:12px;line-height:15px;letter-spacing:-0.30px">Value</div>
<div class="row" style="left:0;top:23px;width:1249px"></div>
<div class="t" style="left:23px;top:24px;font-size:12px;line-height:15px;letter-spacing:-0.15px">Data</div>
<div class="t" style="left:249px;top:24px;font-size:12px;line-height:15px;letter-spacing:-0.15px">Ref&lt;NiSkinData&gt;</div>
<svg class="a" style="left:485px;top:24px" width="12" height="14" viewBox="0 0 12 14"><defs><linearGradient id="rg24" x1="0.2" y1="0" x2="0.5" y2="1"><stop offset="0" stop-color="#9ee0ff"/><stop offset="0.45" stop-color="#3a9ae6"/><stop offset="1" stop-color="#1a5cad"/></linearGradient></defs><path d="M2.5 0.5 L10 0.5 L9.8 7 L7.7 5.3 C6.3 6 5.5 7.2 5.7 8.2 C6.2 9.6 8 10.3 9.9 10.7 L10 11.2 C8.8 12.2 7.8 12.5 6.7 12.4 C3.5 12.2 1.5 10.5 1.6 8.2 C1.7 6.8 2.2 5.6 2.8 4.8 C3.2 4 3.6 3.2 3.8 2.6 L2.8 1.6 Z" fill="url(#rg24)" stroke="#1d4f8f" stroke-width="0.6"/></svg>
<div class="t" style="left:501px;top:24px;font-size:12px;line-height:15px;letter-spacing:-0.15px">25 [NiSkinData]</div>
<div class="row st" style="left:0;top:38px;width:1249px"></div>
<div class="t" style="left:23px;top:39px;font-size:12px;line-height:15px;letter-spacing:-0.15px">Skin Partition</div>
<div class="t" style="left:249px;top:39px;font-size:12px;line-height:15px;letter-spacing:-0.15px">Ref&lt;NiSkinPartition&gt;</div>
<svg class="a" style="left:485px;top:39px" width="12" height="14" viewBox="0 0 12 14"><defs><linearGradient id="rg39" x1="0.2" y1="0" x2="0.5" y2="1"><stop offset="0" stop-color="#9ee0ff"/><stop offset="0.45" stop-color="#3a9ae6"/><stop offset="1" stop-color="#1a5cad"/></linearGradient></defs><path d="M2.5 0.5 L10 0.5 L9.8 7 L7.7 5.3 C6.3 6 5.5 7.2 5.7 8.2 C6.2 9.6 8 10.3 9.9 10.7 L10 11.2 C8.8 12.2 7.8 12.5 6.7 12.4 C3.5 12.2 1.5 10.5 1.6 8.2 C1.7 6.8 2.2 5.6 2.8 4.8 C3.2 4 3.6 3.2 3.8 2.6 L2.8 1.6 Z" fill="url(#rg39)" stroke="#1d4f8f" stroke-width="0.6"/></svg>
<div class="t" style="left:501px;top:39px;font-size:12px;line-height:15px;letter-spacing:-0.15px">26 [NiSkinPartition]</div>
<div class="row" style="left:0;top:53px;width:1249px"></div>
<div class="t" style="left:23px;top:54px;font-size:12px;line-height:15px;letter-spacing:-0.15px">Skeleton Root</div>
<div class="t" style="left:249px;top:54px;font-size:12px;line-height:15px;letter-spacing:-0.15px">Ptr&lt;NiNode&gt;</div>
<svg class="a" style="left:485px;top:54px" width="12" height="14" viewBox="0 0 12 14"><defs><linearGradient id="rg54" x1="0.2" y1="0" x2="0.5" y2="1"><stop offset="0" stop-color="#9ee0ff"/><stop offset="0.45" stop-color="#3a9ae6"/><stop offset="1" stop-color="#1a5cad"/></linearGradient></defs><path d="M2.5 0.5 L10 0.5 L9.8 7 L7.7 5.3 C6.3 6 5.5 7.2 5.7 8.2 C6.2 9.6 8 10.3 9.9 10.7 L10 11.2 C8.8 12.2 7.8 12.5 6.7 12.4 C3.5 12.2 1.5 10.5 1.6 8.2 C1.7 6.8 2.2 5.6 2.8 4.8 C3.2 4 3.6 3.2 3.8 2.6 L2.8 1.6 Z" fill="url(#rg54)" stroke="#1d4f8f" stroke-width="0.6"/></svg>
<div class="t" style="left:501px;top:54px;font-size:12px;line-height:15px;letter-spacing:-0.15px">0 (Scene Root)</div>
<div class="row st" style="left:0;top:68px;width:1249px"></div>
<div class="t" style="left:23px;top:69px;font-size:12px;line-height:15px;letter-spacing:-0.15px">Num Bones</div>
<div class="t" style="left:249px;top:69px;font-size:12px;line-height:15px;letter-spacing:-0.15px">uint</div>
<div class="t" style="left:485px;top:69px;font-size:12px;line-height:15px;letter-spacing:-0.15px">7</div>
<div class="row" style="left:0;top:83px;width:1249px"></div>
<svg class="a" style="left:9px;top:87px" width="7" height="7" viewBox="0 0 7 7"><path d="M6 0.5 L6 6 L0.5 6 Z" fill="#404040"/></svg>
<div class="t" style="left:23px;top:84px;font-size:12px;line-height:15px;letter-spacing:-0.15px">Bones</div>
<div class="t" style="left:249px;top:84px;font-size:12px;line-height:15px;letter-spacing:-0.15px">Ptr&lt;NiNode&gt;</div>
<svg class="a" style="left:482px;top:83px" width="16" height="15" viewBox="0 0 16 15"><defs><linearGradient id="ga83" x1="0" y1="0" x2="0.4" y2="1"><stop offset="0" stop-color="#9cff6c"/><stop offset="0.6" stop-color="#4cc22c"/><stop offset="1" stop-color="#1f8a14"/></linearGradient></defs><path d="M2 1 L8 1 L8 7 L6 5.2 C4.6 6.2 3.8 7.6 4.1 9.4 C4.4 10.8 5 11.4 4.6 12.3 C2.6 11.7 1 9.7 1 7.5 C1 6 1.8 4.5 3 3.4 Z" fill="url(#ga83)" stroke="#2f8f1f" stroke-width="0.6"/><path d="M14 13.5 L8.2 13.5 L8.2 7.8 L10.1 9.4 C11.5 8.4 12.3 6.8 12 5 C11.8 3.7 11.3 3 11.6 2.1 C13.6 2.7 15.1 4.6 15.1 6.7 C15.1 8.2 14.3 9.7 13 10.8 Z" fill="url(#ga83)" stroke="#2f8f1f" stroke-width="0.6"/></svg>
<div class="row st" style="left:0;top:98px;width:1249px"></div>
<div class="t" style="left:43px;top:99px;font-size:12px;line-height:15px;letter-spacing:-0.15px">Bones</div>
<div class="t" style="left:249px;top:99px;font-size:12px;line-height:15px;letter-spacing:-0.15px">Ptr&lt;NiNode&gt;</div>
<svg class="a" style="left:485px;top:99px" width="12" height="14" viewBox="0 0 12 14"><defs><linearGradient id="rg99" x1="0.2" y1="0" x2="0.5" y2="1"><stop offset="0" stop-color="#9ee0ff"/><stop offset="0.45" stop-color="#3a9ae6"/><stop offset="1" stop-color="#1a5cad"/></linearGradient></defs><path d="M2.5 0.5 L10 0.5 L9.8 7 L7.7 5.3 C6.3 6 5.5 7.2 5.7 8.2 C6.2 9.6 8 10.3 9.9 10.7 L10 11.2 C8.8 12.2 7.8 12.5 6.7 12.4 C3.5 12.2 1.5 10.5 1.6 8.2 C1.7 6.8 2.2 5.6 2.8 4.8 C3.2 4 3.6 3.2 3.8 2.6 L2.8 1.6 Z" fill="url(#rg99)" stroke="#1d4f8f" stroke-width="0.6"/></svg>
<div class="t" style="left:501px;top:99px;font-size:12px;line-height:15px;letter-spacing:-0.15px">37 (NPC Spine [Spn0])</div>
<div class="row" style="left:0;top:113px;width:1249px"></div>
<div class="t" style="left:43px;top:114px;font-size:12px;line-height:15px;letter-spacing:-0.15px">Bones</div>
<div class="t" style="left:249px;top:114px;font-size:12px;line-height:15px;letter-spacing:-0.15px">Ptr&lt;NiNode&gt;</div>
<svg class="a" style="left:485px;top:114px" width="12" height="14" viewBox="0 0 12 14"><defs><linearGradient id="rg114" x1="0.2" y1="0" x2="0.5" y2="1"><stop offset="0" stop-color="#9ee0ff"/><stop offset="0.45" stop-color="#3a9ae6"/><stop offset="1" stop-color="#1a5cad"/></linearGradient></defs><path d="M2.5 0.5 L10 0.5 L9.8 7 L7.7 5.3 C6.3 6 5.5 7.2 5.7 8.2 C6.2 9.6 8 10.3 9.9 10.7 L10 11.2 C8.8 12.2 7.8 12.5 6.7 12.4 C3.5 12.2 1.5 10.5 1.6 8.2 C1.7 6.8 2.2 5.6 2.8 4.8 C3.2 4 3.6 3.2 3.8 2.6 L2.8 1.6 Z" fill="url(#rg114)" stroke="#1d4f8f" stroke-width="0.6"/></svg>
<div class="t" style="left:501px;top:114px;font-size:12px;line-height:15px;letter-spacing:-0.15px">40 (NPC Spine1 [Spn1])</div>
<div class="row st" style="left:0;top:128px;width:1249px"></div>
<div class="t" style="left:43px;top:129px;font-size:12px;line-height:15px;letter-spacing:-0.15px">Bones</div>
<div class="t" style="left:249px;top:129px;font-size:12px;line-height:15px;letter-spacing:-0.15px">Ptr&lt;NiNode&gt;</div>
<svg class="a" style="left:485px;top:129px" width="12" height="14" viewBox="0 0 12 14"><defs><linearGradient id="rg129" x1="0.2" y1="0" x2="0.5" y2="1"><stop offset="0" stop-color="#9ee0ff"/><stop offset="0.45" stop-color="#3a9ae6"/><stop offset="1" stop-color="#1a5cad"/></linearGradient></defs><path d="M2.5 0.5 L10 0.5 L9.8 7 L7.7 5.3 C6.3 6 5.5 7.2 5.7 8.2 C6.2 9.6 8 10.3 9.9 10.7 L10 11.2 C8.8 12.2 7.8 12.5 6.7 12.4 C3.5 12.2 1.5 10.5 1.6 8.2 C1.7 6.8 2.2 5.6 2.8 4.8 C3.2 4 3.6 3.2 3.8 2.6 L2.8 1.6 Z" fill="url(#rg129)" stroke="#1d4f8f" stroke-width="0.6"/></svg>
<div class="t" style="left:501px;top:129px;font-size:12px;line-height:15px;letter-spacing:-0.15px">36 (NPC Pelvis [Pelv])</div>
<div class="row" style="left:0;top:143px;width:1249px"></div>
<div class="t" style="left:43px;top:144px;font-size:12px;line-height:15px;letter-spacing:-0.15px">Bones</div>
<div class="t" style="left:249px;top:144px;font-size:12px;line-height:15px;letter-spacing:-0.15px">Ptr&lt;NiNode&gt;</div>
<svg class="a" style="left:485px;top:144px" width="12" height="14" viewBox="0 0 12 14"><defs><linearGradient id="rg144" x1="0.2" y1="0" x2="0.5" y2="1"><stop offset="0" stop-color="#9ee0ff"/><stop offset="0.45" stop-color="#3a9ae6"/><stop offset="1" stop-color="#1a5cad"/></linearGradient></defs><path d="M2.5 0.5 L10 0.5 L9.8 7 L7.7 5.3 C6.3 6 5.5 7.2 5.7 8.2 C6.2 9.6 8 10.3 9.9 10.7 L10 11.2 C8.8 12.2 7.8 12.5 6.7 12.4 C3.5 12.2 1.5 10.5 1.6 8.2 C1.7 6.8 2.2 5.6 2.8 4.8 C3.2 4 3.6 3.2 3.8 2.6 L2.8 1.6 Z" fill="url(#rg144)" stroke="#1d4f8f" stroke-width="0.6"/></svg>
<div class="t" style="left:501px;top:144px;font-size:12px;line-height:15px;letter-spacing:-0.15px">39 (NPC R Thigh [RThg])</div>
<div class="row st" style="left:0;top:158px;width:1249px"></div>
<div class="t" style="left:43px;top:159px;font-size:12px;line-height:15px;letter-spacing:-0.15px">Bones</div>
<div class="t" style="left:249px;top:159px;font-size:12px;line-height:15px;letter-spacing:-0.15px">Ptr&lt;NiNode&gt;</div>
<div class="t" style="left:485px;top:159px;font-size:12px;line-height:15px;letter-spacing:-0.15px">None</div>
<div class="row" style="left:0;top:173px;width:1249px"></div>
<div class="t" style="left:43px;top:174px;font-size:12px;line-height:15px;letter-spacing:-0.15px">Bones</div>
<div class="t" style="left:249px;top:174px;font-size:12px;line-height:15px;letter-spacing:-0.15px">Ptr&lt;NiNode&gt;</div>
<svg class="a" style="left:485px;top:174px" width="12" height="14" viewBox="0 0 12 14"><defs><linearGradient id="rg174" x1="0.2" y1="0" x2="0.5" y2="1"><stop offset="0" stop-color="#9ee0ff"/><stop offset="0.45" stop-color="#3a9ae6"/><stop offset="1" stop-color="#1a5cad"/></linearGradient></defs><path d="M2.5 0.5 L10 0.5 L9.8 7 L7.7 5.3 C6.3 6 5.5 7.2 5.7 8.2 C6.2 9.6 8 10.3 9.9 10.7 L10 11.2 C8.8 12.2 7.8 12.5 6.7 12.4 C3.5 12.2 1.5 10.5 1.6 8.2 C1.7 6.8 2.2 5.6 2.8 4.8 C3.2 4 3.6 3.2 3.8 2.6 L2.8 1.6 Z" fill="url(#rg174)" stroke="#1d4f8f" stroke-width="0.6"/></svg>
<div class="t" style="left:501px;top:174px;font-size:12px;line-height:15px;letter-spacing:-0.15px">38 (NPC L Thigh [LThg])</div>
<div class="row st" style="left:0;top:188px;width:1249px"></div>
<div class="t" style="left:43px;top:189px;font-size:12px;line-height:15px;letter-spacing:-0.15px">Bones</div>
<div class="t" style="left:249px;top:189px;font-size:12px;line-height:15px;letter-spacing:-0.15px">Ptr&lt;NiNode&gt;</div>
<div class="t" style="left:485px;top:189px;font-size:12px;line-height:15px;letter-spacing:-0.15px">None</div>
<div class="row" style="left:0;top:203px;width:1249px"></div>
<div class="t" style="left:23px;top:204px;font-size:12px;line-height:15px;letter-spacing:-0.15px">Num Partitions</div>
<div class="t" style="left:249px;top:204px;font-size:12px;line-height:15px;letter-spacing:-0.15px">int</div>
<div class="t" style="left:485px;top:204px;font-size:12px;line-height:15px;letter-spacing:-0.15px">1</div>
<div class="row st" style="left:0;top:218px;width:1249px"></div>
<svg class="a" style="left:9px;top:221px" width="7" height="10" viewBox="0 0 7 10"><path d="M1 1 L5.5 5 L1 9 Z" fill="none" stroke="#8c8c8c" stroke-width="1"/></svg>
<div class="t" style="left:23px;top:219px;font-size:12px;line-height:15px;letter-spacing:-0.15px">Partitions</div>
<div class="t" style="left:249px;top:219px;font-size:12px;line-height:15px;letter-spacing:-0.15px">BodyPartList</div>
<svg class="a" style="left:482px;top:218px" width="16" height="15" viewBox="0 0 16 15"><defs><linearGradient id="ga218" x1="0" y1="0" x2="0.4" y2="1"><stop offset="0" stop-color="#9cff6c"/><stop offset="0.6" stop-color="#4cc22c"/><stop offset="1" stop-color="#1f8a14"/></linearGradient></defs><path d="M2 1 L8 1 L8 7 L6 5.2 C4.6 6.2 3.8 7.6 4.1 9.4 C4.4 10.8 5 11.4 4.6 12.3 C2.6 11.7 1 9.7 1 7.5 C1 6 1.8 4.5 3 3.4 Z" fill="url(#ga218)" stroke="#2f8f1f" stroke-width="0.6"/><path d="M14 13.5 L8.2 13.5 L8.2 7.8 L10.1 9.4 C11.5 8.4 12.3 6.8 12 5 C11.8 3.7 11.3 3 11.6 2.1 C13.6 2.7 15.1 4.6 15.1 6.7 C15.1 8.2 14.3 9.7 13 10.8 Z" fill="url(#ga218)" stroke="#2f8f1f" stroke-width="0.6"/></svg>
<div class="a" style="left:0;top:296px;width:1249px;height:15px;background:#f0f0f0"></div>
<svg class="a" style="left:4px;top:300px" width="7" height="8" viewBox="0 0 7 8"><path d="M5.5 0.5 L1.5 4 L5.5 7.5" stroke="#606060" stroke-width="2" fill="none"/></svg>
<div class="a" style="left:17px;top:296px;width:596px;height:15px;background:#cdcdcd"></div>
<div class="a" style="left:310px;top:299px;width:10px;height:9px;background:#f0f0f0"></div>
<svg class="a" style="left:1237px;top:300px" width="7" height="8" viewBox="0 0 7 8"><path d="M1.5 0.5 L5.5 4 L1.5 7.5" stroke="#606060" stroke-width="2" fill="none"/></svg>
</div>
</body></html>
